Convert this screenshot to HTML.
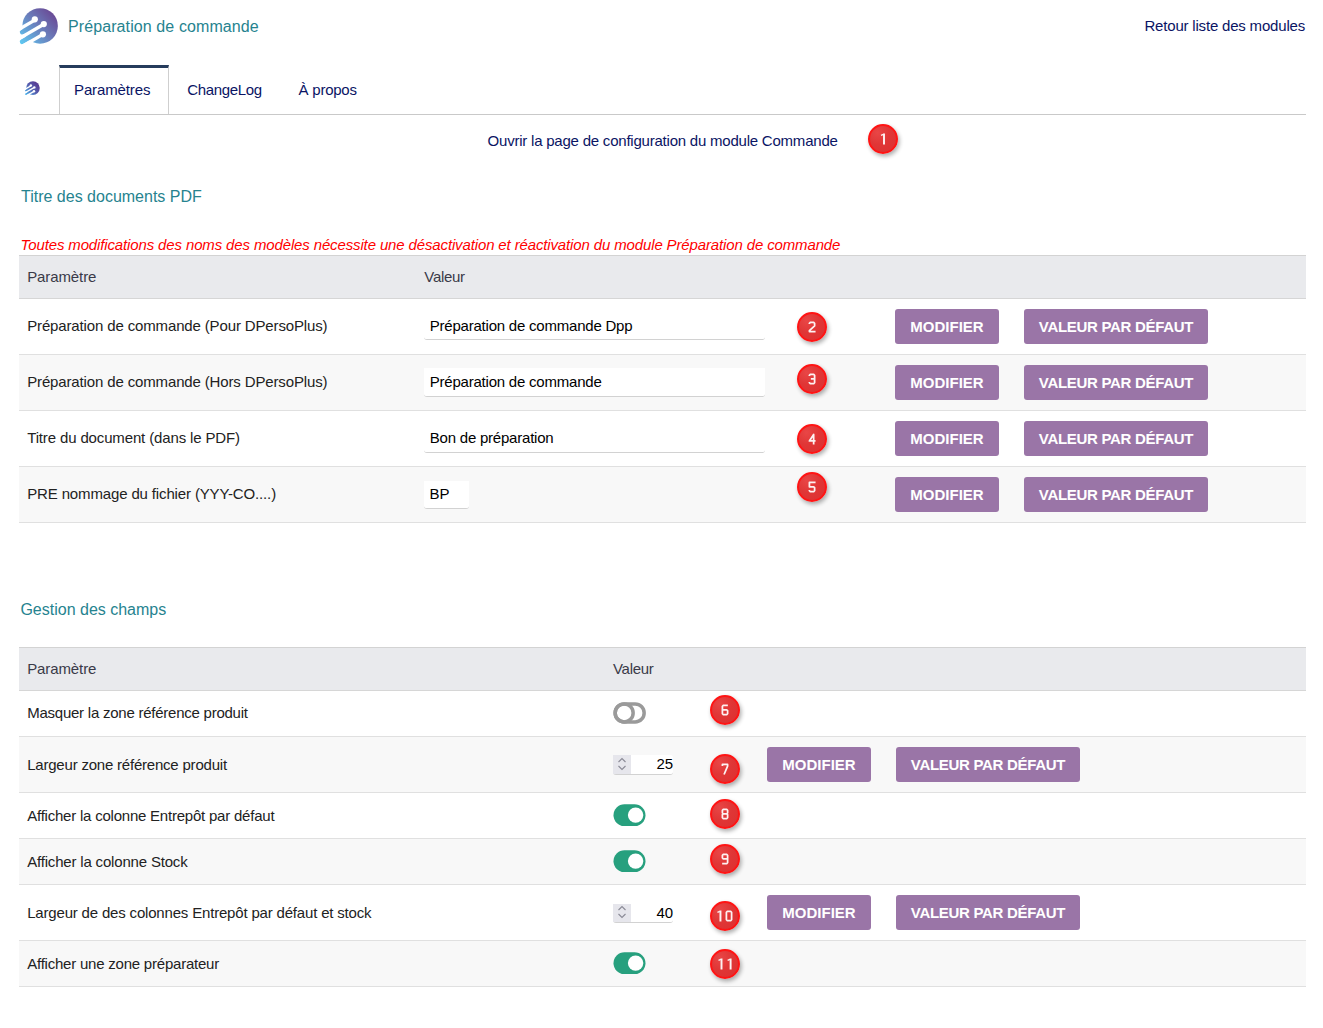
<!DOCTYPE html>
<html><head><meta charset="utf-8">
<style>
html,body{margin:0;padding:0;background:#fff;width:1323px;height:1028px;overflow:hidden;position:relative}
body{font-family:"Liberation Sans",sans-serif;font-size:15px;color:#222}
.a{position:absolute;white-space:nowrap;line-height:15px}
.t16{font-size:16px;line-height:16px}
.lnk{color:#0a1464}
.teal{color:#26838f}
.red{color:#ff0000;font-style:italic}
.hdr{position:absolute;left:19px;width:1287px;background:#e9eaed;border-top:1px solid #d3d3d3;border-bottom:1px solid #d6d6d6;box-sizing:border-box}
.row{position:absolute;left:19px;width:1287px;border-bottom:1px solid #e0e0e0;box-sizing:border-box}
.odd{background:#fff}
.even{background:#f8f8f8}
.btn{position:absolute;height:35px;background:#9a75a7;border-radius:3px;color:#fff;font-weight:bold;font-size:15px;line-height:35px;text-align:center;box-sizing:border-box}
.inp{position:absolute;background:#fff;border-bottom:1px solid #d2d2d2;border-radius:0 0 3px 3px;box-sizing:border-box;color:#000}
.badge{position:absolute;width:30px;height:30px;border-radius:50%;box-sizing:border-box;border:2px solid #ff1414;background:radial-gradient(circle at 30% 25%,#e94646 0%,#e03636 45%,#dc3030 100%);box-shadow:1.5px 2.5px 4px rgba(0,0,0,0.32)}
.badge svg{position:absolute;left:0;top:0}
.tg{position:absolute}
</style></head><body>

<!-- header logo -->
<svg class="a" style="left:16px;top:4px" width="46" height="44" viewBox="16 4 46 44">
<defs>
<linearGradient id="lg" gradientUnits="userSpaceOnUse" x1="21" y1="44" x2="58" y2="9">
<stop offset="0" stop-color="#5fcaf3"/><stop offset="0.5" stop-color="#6a7cba"/><stop offset="1" stop-color="#6a3a8a"/>
</linearGradient>
<mask id="mk" maskUnits="userSpaceOnUse" x="0" y="0" width="80" height="60">
<rect x="0" y="0" width="80" height="60" fill="#fff"/>
<g stroke="#000" stroke-width="3.4">
<line x1="8" y1="35.55" x2="34.8" y2="20.1"/>
<line x1="8" y1="45.0" x2="43.8" y2="24.2"/>
<line x1="8" y1="54.6" x2="42.9" y2="34.4"/>
</g>
<g fill="#000"><circle cx="34.8" cy="19.3" r="3.1"/><circle cx="43.8" cy="24.1" r="3.1"/><circle cx="42.9" cy="34.3" r="3.1"/></g>
</mask>
<g id="logo">
<g mask="url(#mk)">
<circle cx="40.1" cy="25.9" r="17.75" fill="url(#lg)"/>
<line x1="22.2" y1="32.1" x2="42" y2="20.7" stroke="url(#lg)" stroke-width="4.8" stroke-linecap="round"/>
<line x1="22.2" y1="41.7" x2="42" y2="30.3" stroke="url(#lg)" stroke-width="4.8" stroke-linecap="round"/>
</g>
</g>
</defs>
<use href="#logo"/>
</svg>
<div class="a t16 teal" style="left:68px;top:19px;letter-spacing:0.1px">Préparation de commande</div>
<div class="a lnk" style="right:18px;top:18px;letter-spacing:-0.19px">Retour liste des modules</div>

<!-- tabs -->
<svg class="a" style="left:24.5px;top:80.5px" width="15" height="15" viewBox="19.5 7.5 39 39">
<defs><linearGradient id="lg2" gradientUnits="userSpaceOnUse" x1="21" y1="44" x2="58" y2="9">
<stop offset="0" stop-color="#4cb8ee"/><stop offset="0.45" stop-color="#5560b0"/><stop offset="1" stop-color="#5a2c86"/>
</linearGradient></defs>
<g mask="url(#mk)">
<circle cx="40.1" cy="25.9" r="17.75" fill="url(#lg2)"/>
<line x1="22.2" y1="32.1" x2="42" y2="20.7" stroke="url(#lg2)" stroke-width="4.8" stroke-linecap="round"/>
<line x1="22.2" y1="41.7" x2="42" y2="30.3" stroke="url(#lg2)" stroke-width="4.8" stroke-linecap="round"/>
</g></svg>
<div class="a" style="left:59px;top:65px;width:110px;height:50px;box-sizing:border-box;border-top:3px solid #263c5c;border-left:1px solid #cfcfcf;border-right:1px solid #cfcfcf;background:#fff"></div>
<div class="a" style="left:19px;top:114px;width:1287px;height:1px;background:#c9c9c9"></div>
<div class="a lnk" style="left:74px;top:81.5px;letter-spacing:-0.12px">Paramètres</div>
<div class="a lnk" style="left:187.3px;top:81.5px;letter-spacing:-0.36px">ChangeLog</div>
<div class="a lnk" style="left:298.6px;top:81.5px;letter-spacing:-0.24px">À propos</div>

<div class="a lnk" style="left:487.6px;top:133.2px;letter-spacing:-0.22px">Ouvrir la page de configuration du module Commande</div>

<div class="a t16 teal" style="left:21px;top:189.3px">Titre des documents PDF</div>
<div class="a red" style="left:20.6px;top:237.1px;letter-spacing:-0.135px">Toutes modifications des noms des modèles nécessite une désactivation et réactivation du module Préparation de commande</div>

<!-- table 1 -->
<div class="hdr" style="top:255px;height:44px"></div>
<div class="a" style="left:27.2px;top:269.3px;color:#3a3a48;letter-spacing:-0.1px">Paramètre</div>
<div class="a" style="left:424.3px;top:269.3px;color:#3a3a48;letter-spacing:-0.3px">Valeur</div>

<div class="row odd" style="top:299px;height:56px"></div>
<div class="row even" style="top:355px;height:56px"></div>
<div class="row odd" style="top:411px;height:56px"></div>
<div class="row even" style="top:467px;height:56px"></div>

<div class="a" style="left:27.2px;top:318.2px;letter-spacing:-0.14px">Préparation de commande (Pour DPersoPlus)</div>
<div class="a" style="left:27.2px;top:374.2px;letter-spacing:-0.14px">Préparation de commande (Hors DPersoPlus)</div>
<div class="a" style="left:27.2px;top:430.2px;letter-spacing:-0.14px">Titre du document (dans le PDF)</div>
<div class="a" style="left:27.2px;top:486.2px;letter-spacing:-0.14px">PRE nommage du fichier (YYY-CO....)</div>

<div class="inp" style="left:424px;top:312px;width:341px;height:28px"></div>
<div class="inp" style="left:424px;top:368px;width:341px;height:29px"></div>
<div class="inp" style="left:424px;top:424px;width:341px;height:29px"></div>
<div class="inp" style="left:424px;top:481px;width:45px;height:28px"></div>
<div class="a" style="left:429.8px;top:318px;color:#000;letter-spacing:-0.22px">Préparation de commande Dpp</div>
<div class="a" style="left:429.8px;top:374px;color:#000;letter-spacing:-0.22px">Préparation de commande</div>
<div class="a" style="left:429.8px;top:430px;color:#000;letter-spacing:-0.22px">Bon de préparation</div>
<div class="a" style="left:429.6px;top:486.2px;color:#000">BP</div>

<div class="btn" style="left:895px;top:309px;width:104px">MODIFIER</div>
<div class="btn" style="left:1024px;top:309px;width:184px;letter-spacing:-0.3px">VALEUR PAR DÉFAUT</div>
<div class="btn" style="left:895px;top:365px;width:104px">MODIFIER</div>
<div class="btn" style="left:1024px;top:365px;width:184px;letter-spacing:-0.3px">VALEUR PAR DÉFAUT</div>
<div class="btn" style="left:895px;top:421px;width:104px">MODIFIER</div>
<div class="btn" style="left:1024px;top:421px;width:184px;letter-spacing:-0.3px">VALEUR PAR DÉFAUT</div>
<div class="btn" style="left:895px;top:477px;width:104px">MODIFIER</div>
<div class="btn" style="left:1024px;top:477px;width:184px;letter-spacing:-0.3px">VALEUR PAR DÉFAUT</div>

<!-- table 2 -->
<div class="a t16 teal" style="left:20.4px;top:601.9px">Gestion des champs</div>
<div class="hdr" style="top:647px;height:44px"></div>
<div class="a" style="left:27.2px;top:661.3px;color:#3a3a48;letter-spacing:-0.1px">Paramètre</div>
<div class="a" style="left:613px;top:661.3px;color:#3a3a48;letter-spacing:-0.3px">Valeur</div>

<div class="row odd" style="top:691px;height:46px"></div>
<div class="row even" style="top:737px;height:56px"></div>
<div class="row odd" style="top:793px;height:46px"></div>
<div class="row even" style="top:839px;height:46px"></div>
<div class="row odd" style="top:885px;height:56px"></div>
<div class="row even" style="top:941px;height:46px"></div>

<div class="a" style="left:27.2px;top:705.1px;letter-spacing:-0.24px">Masquer la zone référence produit</div>
<div class="a" style="left:27.2px;top:757.3px;letter-spacing:-0.21px">Largeur zone référence produit</div>
<div class="a" style="left:27.2px;top:808.1px;letter-spacing:-0.22px">Afficher la colonne Entrepôt par défaut</div>
<div class="a" style="left:27.2px;top:854.1px;letter-spacing:-0.18px">Afficher la colonne Stock</div>
<div class="a" style="left:27.2px;top:905.3px;letter-spacing:-0.18px">Largeur de des colonnes Entrepôt par défaut et stock</div>
<div class="a" style="left:27.2px;top:956.1px;letter-spacing:-0.22px">Afficher une zone préparateur</div>

<!-- toggles -->
<svg class="tg" style="left:613px;top:702px" width="34" height="23" viewBox="0 0 34 23">
<rect x="2.15" y="1.95" width="29" height="18" rx="9" fill="none" stroke="#9a9a9a" stroke-width="3.5"/>
<circle cx="11.15" cy="10.95" r="9" fill="none" stroke="#9a9a9a" stroke-width="3.5"/>
</svg>
<svg class="tg" style="left:613px;top:804px" width="33" height="22" viewBox="0 0 33 22">
<rect x="0.5" y="0.3" width="32" height="22" rx="11" fill="#27a07e"/>
<circle cx="22.6" cy="11.1" r="7.7" fill="#fff"/>
</svg>
<svg class="tg" style="left:613px;top:850px" width="33" height="22" viewBox="0 0 33 22">
<rect x="0.5" y="0.3" width="32" height="22" rx="11" fill="#27a07e"/>
<circle cx="22.6" cy="11.1" r="7.7" fill="#fff"/>
</svg>
<svg class="tg" style="left:613px;top:952px" width="33" height="22" viewBox="0 0 33 22">
<rect x="0.5" y="0.3" width="32" height="22" rx="11" fill="#27a07e"/>
<circle cx="22.6" cy="11.1" r="7.7" fill="#fff"/>
</svg>

<!-- number inputs -->
<div class="inp" style="left:613px;top:755px;width:60px;height:20px;border-radius:3px"></div>
<div class="a" style="left:613px;top:755px;width:18px;height:19px;background:#e6e6ec"></div>
<svg class="a" style="left:616px;top:756px" width="12" height="16" viewBox="0 0 12 16"><path d="M2.5 6 L6 2.5 L9.5 6 M2.5 10 L6 13.5 L9.5 10" fill="none" stroke="#8a8a96" stroke-width="1.1"/></svg>
<div class="a" style="left:656.5px;top:755.7px;color:#000">25</div>

<div class="inp" style="left:613px;top:904px;width:60px;height:19px;border-radius:3px"></div>
<div class="a" style="left:613px;top:904px;width:18px;height:18px;background:#e6e6ec"></div>
<svg class="a" style="left:616px;top:904px" width="12" height="16" viewBox="0 0 12 16"><path d="M2.5 6 L6 2.5 L9.5 6 M2.5 10 L6 13.5 L9.5 10" fill="none" stroke="#8a8a96" stroke-width="1.1"/></svg>
<div class="a" style="left:656.5px;top:904.5px;color:#000">40</div>

<div class="btn" style="left:767px;top:747px;width:104px">MODIFIER</div>
<div class="btn" style="left:896px;top:747px;width:184px;letter-spacing:-0.3px">VALEUR PAR DÉFAUT</div>
<div class="btn" style="left:767px;top:895px;width:104px">MODIFIER</div>
<div class="btn" style="left:896px;top:895px;width:184px;letter-spacing:-0.3px">VALEUR PAR DÉFAUT</div>

<!-- badges -->
<svg width="0" height="0" style="position:absolute"><defs>
<path id="g0" d="M1.85,0.95 H5.25 L6.15,1.85 V9.15 L5.25,10.05 H1.85 L0.95,9.15 V1.85 Z" fill="none" stroke="#fdf2f2" stroke-width="1.75" stroke-linejoin="round"/>
<path id="g2" d="M0.95,2.6 V1.85 L1.85,0.95 H5.25 L6.15,1.85 V4.4 L0.95,9.2 V10.05 H7.1" fill="none" stroke="#fdf2f2" stroke-width="1.75" stroke-linejoin="round"/>
<path id="g3" d="M0.95,2.6 V1.85 L1.85,0.95 H5.25 L6.15,1.85 V9.15 L5.25,10.05 H1.85 L0.95,9.15 V8.4 M2.4,5.3 H6.15" fill="none" stroke="#fdf2f2" stroke-width="1.75" stroke-linejoin="round"/>
<path id="g4" d="M5.2,11 V0.95 L0.95,7.4 H7.1" fill="none" stroke="#fdf2f2" stroke-width="1.75" stroke-linejoin="round"/>
<path id="g5" d="M7.1,0.95 H0.95 V5.3 H5.25 L6.15,6.2 V9.15 L5.25,10.05 H1.85 L0.95,9.15 V8.4" fill="none" stroke="#fdf2f2" stroke-width="1.75" stroke-linejoin="round"/>
<path id="g6" d="M6.4,0.95 H1.85 L0.95,1.85 V9.15 L1.85,10.05 H5.25 L6.15,9.15 V6.2 L5.25,5.3 H0.95" fill="none" stroke="#fdf2f2" stroke-width="1.75" stroke-linejoin="round"/>
<path id="g7" d="M0.95,2.6 V0.95 H6.15 V2.6 L2.6,11" fill="none" stroke="#fdf2f2" stroke-width="1.75" stroke-linejoin="round"/>
<path id="g8" d="M1.85,0.95 H5.25 L6.15,1.85 V4.4 L5.25,5.3 H1.85 L0.95,4.4 V1.85 Z M0.95,6.2 V9.15 L1.85,10.05 H5.25 L6.15,9.15 V6.2 L5.25,5.3 H1.85 Z" fill="none" stroke="#fdf2f2" stroke-width="1.75" stroke-linejoin="round"/>
<path id="g9" d="M0.7,10.05 H5.25 L6.15,9.15 V1.85 L5.25,0.95 H1.85 L0.95,1.85 V4.4 L1.85,5.3 H6.15" fill="none" stroke="#fdf2f2" stroke-width="1.75" stroke-linejoin="round"/>
<g id="g1"><path d="M3.2,0 V11" stroke="#fdf2f2" stroke-width="1.95"/><path d="M0.2,1.95 L2.6,0.95" stroke="#fdf2f2" stroke-width="1.3"/></g>
</defs></svg>
<div class="badge" style="left:867.50px;top:123.80px"><svg width="26" height="26" viewBox="0 0 26 26"><use href="#g1" x="10.8" y="7.5"/></svg></div>
<div class="badge" style="left:797.25px;top:311.50px"><svg width="26" height="26" viewBox="0 0 26 26"><use href="#g2" x="9.45" y="7.5"/></svg></div>
<div class="badge" style="left:797.25px;top:364.30px"><svg width="26" height="26" viewBox="0 0 26 26"><use href="#g3" x="9.45" y="7.5"/></svg></div>
<div class="badge" style="left:797.25px;top:423.50px"><svg width="26" height="26" viewBox="0 0 26 26"><use href="#g4" x="9.45" y="7.5"/></svg></div>
<div class="badge" style="left:797.25px;top:471.50px"><svg width="26" height="26" viewBox="0 0 26 26"><use href="#g5" x="9.45" y="7.5"/></svg></div>
<div class="badge" style="left:709.70px;top:694.60px"><svg width="26" height="26" viewBox="0 0 26 26"><use href="#g6" x="9.45" y="7.5"/></svg></div>
<div class="badge" style="left:709.70px;top:753.70px"><svg width="26" height="26" viewBox="0 0 26 26"><use href="#g7" x="9.45" y="7.5"/></svg></div>
<div class="badge" style="left:709.70px;top:798.80px"><svg width="26" height="26" viewBox="0 0 26 26"><use href="#g8" x="9.45" y="7.5"/></svg></div>
<div class="badge" style="left:709.70px;top:843.80px"><svg width="26" height="26" viewBox="0 0 26 26"><use href="#g9" x="9.45" y="7.5"/></svg></div>
<div class="badge" style="left:709.70px;top:900.80px"><svg width="26" height="26" viewBox="0 0 26 26"><use href="#g1" x="5.25" y="7.5"/><use href="#g0" x="13.45" y="7.5"/></svg></div>
<div class="badge" style="left:709.70px;top:948.50px"><svg width="26" height="26" viewBox="0 0 26 26"><use href="#g1" x="6.3" y="7.5"/><use href="#g1" x="15.4" y="7.5"/></svg></div>

</body></html>
